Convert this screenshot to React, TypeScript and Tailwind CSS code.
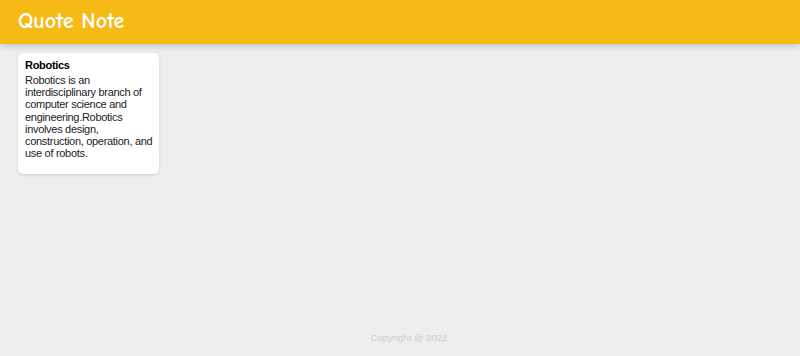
const notes = [
  {
    title: "Robotics",
    content:
      "Robotics is an interdisciplinary branch of computer science and engineering.Robotics involves design, construction, operation, and use of robots.",
  },
];

function Header() {
  return (
    <header className="h-[44px] bg-[#f5ba13] px-[18px] flex items-center shadow-[0_0_8px_rgba(0,0,0,0.3)] relative z-10">
      <h1 className="text-white text-[22px] leading-none font-semibold font-['Comic_Sans_MS','Comic_Neue',cursive] -mt-[2px]">
        Quote Note
      </h1>
    </header>
  );
}

function Note({ title, content }: { title: string; content: string }) {
  return (
    <div className="w-[141px] bg-white rounded-[5px] shadow-[0_1px_3px_#ccc] pt-[6px] pb-[15px] pl-[7px] pr-[4px]">
      <h2 className="text-[11px] leading-[12px] tracking-[-0.3px] font-bold text-black mb-[3px]">{title}</h2>
      <p className="text-[11px] leading-[12.2px] tracking-[-0.3px] text-[#222]">{content}</p>
    </div>
  );
}

export default function App() {
  return (
    <div className="h-[356px] bg-[#eeeeee] flex flex-col font-['Liberation_Sans',Arial,sans-serif]">
      <Header />
      <main className="flex flex-wrap gap-[10px] px-[18px] pt-[9px]">
        {notes.map((n) => (
          <Note key={n.title} title={n.title} content={n.content} />
        ))}
      </main>
      <footer className="mt-auto pb-[11px] pl-[18px] text-center">
        <p className="text-[9.5px] text-[#cccccc]">Copyright @ 2022</p>
      </footer>
    </div>
  );
}
